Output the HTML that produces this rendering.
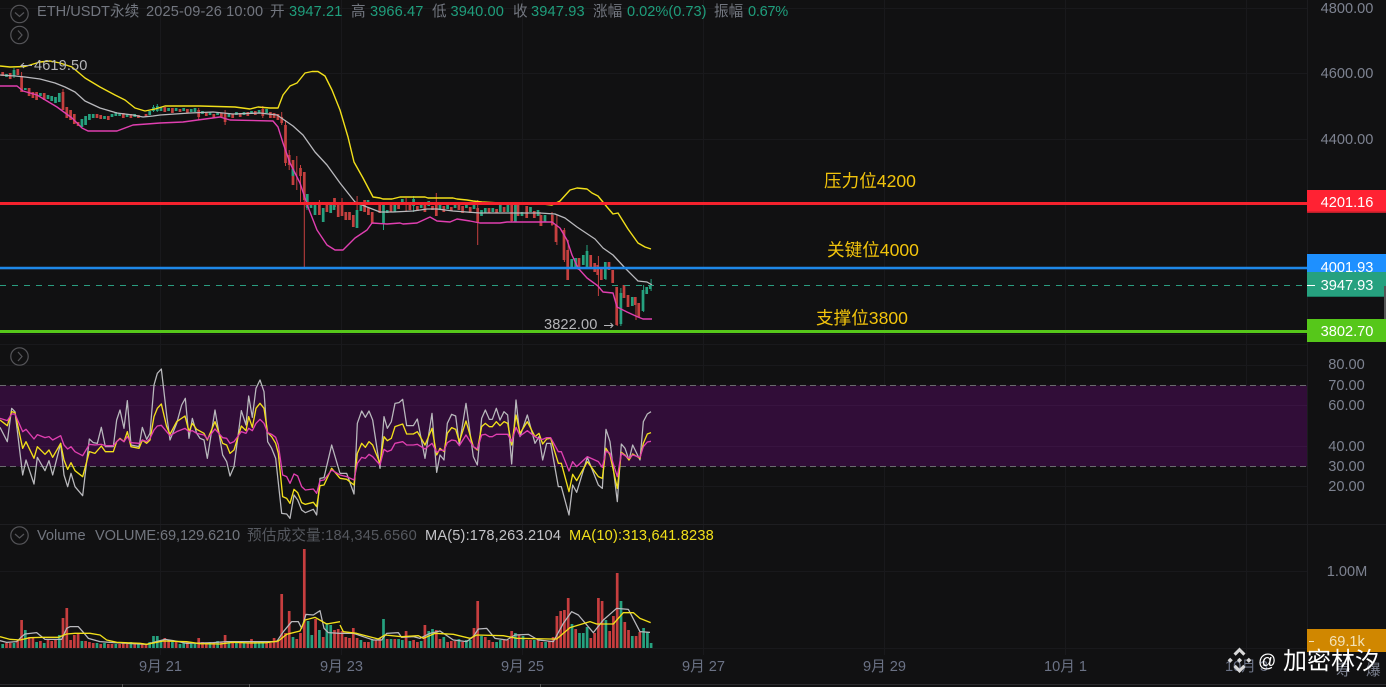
<!DOCTYPE html>
<html><head><meta charset="utf-8">
<style>
html,body{margin:0;padding:0;background:#111112;width:1386px;height:687px;overflow:hidden}
svg{display:block;position:absolute;left:0;top:0}
text{font-family:"Liberation Sans","Noto Sans CJK SC",sans-serif;font-size:14.6px}
.g{fill:#72767f}.u{fill:#1f9e7c}.a{fill:#7d8290;text-anchor:middle}.d{fill:#6b7285;text-anchor:middle}
.w{fill:#fff;text-anchor:middle}.y{fill:#f2c40c;font-size:17.6px}
.l{fill:none;stroke-linejoin:round}
</style></head><body>
<svg width="1386" height="687" viewBox="0 0 1386 687">
<rect width="1386" height="687" fill="#111112"/>
<!-- grid -->
<path d="M0 8.5H1307M0 73.5H1307M0 139.5H1307M0 204.5H1307M0 269.5H1307M0 334.5H1307M0 344.5H1307M0 365.5H1307M0 405.5H1307M0 446.5H1307M0 486.5H1307M0 571.5H1307M0 648.5H1307" stroke="#19191c" stroke-width="1"/>
<path d="M160.5 0V655M341.5 0V655M522.5 0V655M703.5 0V655M884.5 0V655M1065.5 0V655M1246.5 0V655" stroke="#19191c" stroke-width="1"/>
<path d="M1307.5 0V652" stroke="#1c1c1f"/>
<path d="M0 524.5H1386" stroke="#1e1e21"/>
<path d="M0 684.5H1386" stroke="#2a2a2d"/>
<path d="M122.5 684V687M249.5 684V687M540.5 684V687" stroke="#555"/>
<!-- RSI band -->
<rect x="0" y="385.5" width="1307" height="81" fill="#310d38"/>
<path d="M0 385.5H1307M0 466.5H1307" stroke="#6a6a6e" stroke-width="1" stroke-dasharray="6 4"/>
<path d="M0 405.5H1307M0 446.5H1307" stroke="#381440" stroke-width="1"/>
<!-- candle wicks -->
<path fill="none" stroke="#c5403f" stroke-width="1" d="M21.6 72V92M63 89V110M198.7 108V120M225.1 110V125M262.8 106V118M304.3 200V267M281.7 112V125M285.5 120V166M289.2 150V170M296.8 156V190M300.5 165V202M319.4 200V215M342 198V215M357.1 196V228M406.1 198V212M436.3 193V216M477.7 200V245M511.7 203V222M540 212V226M552 212V226M568.2 240V280M598.4 256V296M617.2 287V326M636 297V320M556.9 215V245M564.4 228V262"/>
<path fill="none" stroke="#26a17f" stroke-width="1" d="M14 68V78M153.5 105V112M157.3 104V112M307 194V210M383.5 203V230M413.6 196V212M620.9 288V326M643.6 285V312M651.1 279V291M587 245V268M605.9 262V280"/>
<!-- candle bodies -->
<path fill="none" stroke="#c5403f" stroke-width="2.7" d="M2.7 72V76M10.2 73V79M17.8 69V75M21.6 76V92M29.1 88V96M32.9 92V98M36.6 92V100M44.2 93V100M63 92V110M66.8 107V118M70.6 110V120M74.3 114V124M78.1 122V126M97 114V118M100.7 115V119M108.3 116V120M123.3 113V118M130.9 114V118M138.4 115V118M146 114V117M164.8 107V112M172.4 108V113M180 109V112M187.4 109V113M198.7 110V117M206.3 112V116M213.8 114V118M221.4 113V117M225.1 114V122M232.7 114V118M240.2 113V117M247.8 112V116M255.3 111V115M262.8 109V116M270.4 112V118M274.1 113V118M277.9 114V120M281.7 117V123M285.5 125V163M289.2 155V165M293 160V185M300.5 168V176M304.3 172V200M307 200V207M319.4 205V215M326.9 205V212M334.5 198V207M338.2 205V217M342 205V216M345.8 212V220M349.5 212V220M353.3 215V227M364.6 200V212M368.4 208V215M372.2 212V223M379.7 204V213M391 205V212M398.6 204V209M409.9 203V210M417.4 206V211M424.9 205V212M432.5 206V210M436.3 203V216M443.8 206V212M451.3 207V211M458.9 205V210M462.6 206V213M470.2 207V213M477.7 208V222M489 208V213M496.6 209V213M504.1 207V212M511.7 205V221M518 205V216M526.7 206V218M534.3 211V218M541 215V226M552.3 215V225M556 225V242M564 230V260M567.7 250V280M579 258V270M590.7 255V268M594.7 263V272M597.7 265V275M601.3 267V280M609 262V270M612.7 270V283M616.7 287V325M624 285V298M628 295V307M635.3 297V305M638.7 303V317"/>
<path fill="none" stroke="#26a17f" stroke-width="2.7" d="M6.5 74V77M14 70V76M25.3 88V90M40.4 93V96M48 95V99M51.7 96V101M55.5 97V103M59.3 93V102M81.9 119V127M85.6 116V125M89.4 114V120M93.2 114V118M104.5 116V119M112 114V117M115.8 112V116M119.6 113V116M127.1 114V117M134.7 114V117M149.7 111V115M153.5 107V111M157.3 106V111M161 107V111M168.6 108V111M176.1 108V111M183.7 108V111M191.2 109V112M195 108V112M202.5 111V114M210 112V115M217.6 112V115M228.9 113V117M236.4 112V115M244 112V115M251.5 111V114M259.1 110V113M266.6 109V113M292.9 169V176M307.3 194V208M311 204V208M315 205V215M323.2 208V222M330.7 205V213M334 205V210M357 210V228M360.9 204V211M368 200V205M383.5 205V224M387.2 210V213M394.8 205V212M402.3 199V205M413.6 199V206M421.2 203V208M428.7 201V206M440 204V209M447.6 205V209M455.1 205V208M466.4 204V208M474 205V209M481.5 210V216M485.3 208V213M492.8 208V212M500.3 205V212M507.9 204V212M515.4 203V222M522 212V216M530.5 207V212M538 210V216M545 215V222M571.7 259V269M575.7 258V268M583.3 255V265M587 251V268M605.3 262V279M620.9 293V324M632.3 297V306M643 290V311M646.7 287V294M650.3 285V289"/>
<!-- main MA lines -->
<polyline class="l" stroke="#f2e01a" stroke-width="1.4" points="0,66 10,67 25,66.5 40,62 50,61 60,63 72,67 85,78 100,87 115,95 125,100 135,108 145,111 155,109 165,106 180,106 200,106 235,107 250,109 258,107 270,108 278,108 283,95 290,86 297,83 305,73 312,71.5 318,71.5 325,76 332,90 340,110 348,137 354,162 363,178 373,197 380,198 383,199 392,199 400,197 410,197 425,197 428,198 453,198 457,199 467,200 473,201 482,202 500,203 543,204 552,205 560,201 570,190 577,188 587,189 592,193 598,196 607,207 613,214 618,213 628,229 638,243 645,247 651,249"/>
<polyline class="l" stroke="#b9b9bd" stroke-width="1.3" points="0,75 15,76 25,77 40,79 55,83 65,87 75,92 85,101 100,108 117,113 133,115 143,117 153,116 160,115 190,113 213,112 233,114 260,113 277,115 293,126 303,135 315,152 327,165 340,183 355,202 367,207 380,212 393,212 413,211 427,209 437,209 453,211 480,213 500,213 540,213 555,214 565,218 577,227 595,239 603,248 613,255 625,268 638,281 647,282 652,285"/>
<polyline class="l" stroke="#e03fb0" stroke-width="1.4" points="0,86 17,86 23,91 37,95 57,107 72,118 82,128 88,131 117,131 133,125 147,124 160,123 183,122 220,117 230,120 273,121 278,127 283,143 290,163 300,183 308,207 317,230 327,245 335,250 343,250 355,238 367,230 372,223 387,224 400,223 403,224 417,223 430,217 437,221 450,222 457,219 470,221 480,223 500,223 507,222 552,222 560,228 567,240 572,255 578,268 587,278 598,286 603,292 613,293 617,307 627,312 638,317 643,319 652,319"/>
<!-- level lines -->
<path d="M0 203.5H1307" stroke="#f5222d" stroke-width="3"/>
<path d="M0 268H1307" stroke="#1e88e8" stroke-width="2.5"/>
<path d="M0 331.5H1307" stroke="#56c71a" stroke-width="3"/>
<path d="M0 285.5H1307" stroke="#2a9d80" stroke-width="1" stroke-dasharray="6 6"/>
<!-- RSI lines left -->
<g transform="translate(0,340) scale(.33333)" fill="none" stroke-linejoin="round">
<polyline stroke="#b9b9bd" stroke-width="3.8" points="0,262 22,305 35,205 45,215 68,405 78,360 102,432 112,352 135,392 147,362 158,405 182,310 192,405 203,440 213,400 225,440 248,467 268,297 280,308 292,310 304,262 316,320 340,320 350,240 360,210 372,265 382,182 393,315 417,320 427,262 440,298 450,280 462,135 472,100 484,87 500,225 510,300 530,250 545,195 556,175 567,295 577,235 590,280 600,295 612,300 622,355 645,210 668,345 680,365 690,408 702,380 724,212 738,255 746,168 757,232 768,145 780,120 792,155 803,305 815,325 827,355 845,520 860,522 870,535 882,465 893,480 905,510 916,518 940,508 950,525 960,415 972,413 995,315 1020,400"/>
<polyline stroke="#f2e01a" stroke-width="4" points="0,240 22,257 35,215 45,218 68,325 78,305 102,355 112,320 135,343 147,330 158,352 182,310 192,360 203,388 213,368 225,392 248,410 268,335 285,340 304,318 316,335 340,335 350,305 360,295 372,305 382,275 393,320 417,325 427,300 440,310 450,300 462,230 472,205 484,192 500,260 510,283 530,245 555,228 567,275 577,250 590,268 612,280 622,300 645,245 668,310 680,315 690,340 702,330 724,258 738,272 746,230 757,262 768,205 780,190 792,205 803,278 815,290 827,310 835,340 848,470 860,475 870,490 882,448 893,458 905,488 916,493 940,487 950,500 960,437 972,435 995,385 1020,415"/>
<polyline stroke="#e03fb0" stroke-width="4" points="0,235 22,242 35,222 45,222 68,275 78,268 102,297 112,284 135,293 147,290 158,300 182,287 192,315 203,327 213,320 225,335 248,347 268,313 285,315 304,313 316,317 340,317 350,305 360,297 372,305 382,290 393,308 417,310 427,300 440,305 450,295 462,270 472,258 484,256 500,275 510,287 530,275 555,265 567,275 577,272 590,280 612,285 622,297 645,267 668,293 680,295 690,310 702,305 724,275 738,280 746,265 757,272 768,250 780,238 792,250 803,278 815,283 827,292 835,315 848,405 860,410 870,430 882,402 893,408 905,440 916,450 940,447 950,460 960,422 972,420 995,390 1020,405"/>
</g>
<g transform="translate(330,340) scale(.33333)" fill="none" stroke-linejoin="round">
<polyline stroke="#b9b9bd" stroke-width="3.8" points="30,400 50,400 72,462 82,250 95,213 106,232 117,213 128,240 150,385 162,230 172,265 184,245 195,190 207,188 218,178 230,257 250,257 262,237 285,355 306,220 320,397 330,345 342,360 352,250 365,223 377,228 388,315 408,190 430,350 442,375 455,235 466,210 478,238 487,238 499,205 510,240 522,215 533,225 545,372 558,180 570,290 592,225 615,310 627,290 638,360 650,310 662,310 685,440 694,440 717,525 728,435 740,457 772,352 805,435 817,445 828,268 840,305 862,485 874,312 885,325 897,360 908,315 930,360 940,245 952,222 963,215"/>
<polyline stroke="#f2e01a" stroke-width="4" points="30,415 50,418 72,435 82,340 95,310 106,322 117,305 128,315 150,370 162,290 172,302 184,295 195,260 218,252 230,282 250,282 262,275 285,315 306,265 320,345 330,325 342,335 352,280 365,263 377,268 388,305 408,243 430,320 442,330 455,260 466,250 478,260 487,260 499,245 510,257 522,245 533,250 545,315 558,225 570,280 592,245 615,290 627,280 638,312 650,297 662,295 685,370 694,370 717,455 728,403 740,422 772,365 805,410 817,415 828,325 840,345 862,445 874,337 885,345 897,360 908,342 930,355 940,310 952,282 963,278"/>
<polyline stroke="#e03fb0" stroke-width="4" points="30,405 50,410 72,420 82,370 95,352 106,355 117,343 128,350 150,375 162,328 172,335 184,330 195,310 218,305 230,315 250,315 262,313 285,327 306,310 320,337 330,330 342,332 352,308 365,300 377,302 388,317 408,285 430,320 442,327 455,285 466,283 478,290 487,290 499,283 533,283 545,305 558,262 570,288 592,272 615,290 627,297 638,298 650,293 662,293 685,335 694,335 717,393 728,365 740,380 772,350 805,365 817,382 828,333 840,340 862,410 874,340 885,347 897,355 908,345 930,352 940,320 952,306 963,304"/>
</g>
<!-- volume bars -->
<path fill="none" stroke="#c73e3f" stroke-width="2.7" d="M6.5 648V643M10.2 648V643M17.8 648V640M21.6 648V620M29.1 648V637M32.9 648V638M40.4 648V641M48 648V640M51.7 648V641M55.5 648V640M63 648V618M66.8 648V608M70.6 648V640M74.3 648V635M78.1 648V633M85.6 648V641M89.4 648V642M93.2 648V643M100.7 648V644M108.3 648V644M112 648V644M119.6 648V644M123.3 648V643M127.1 648V644M134.7 648V643M142.2 648V643M146 648V644M164.8 648V638M168.6 648V641M176.1 648V641M187.4 648V642M198.7 648V638M202.5 648V642M206.3 648V643M213.8 648V642M221.4 648V642M225.1 648V635M232.7 648V642M240.2 648V643M247.8 648V643M251.5 648V639M266.6 648V643M270.4 648V643M274.1 648V638M277.9 648V640M281.7 648V594M285.5 648V633M289.2 648V611M296.8 648V639M300.5 648V633M304.3 648V549M315.6 648V619M323.2 648V637M334.5 648V630M338.2 648V629M342 648V631M345.8 648V637M349.5 648V638M353.3 648V628M357.1 648V638M364.6 648V642M368.4 648V642M376 648V640M379.7 648V638M387.2 648V639M394.8 648V639M406.1 648V631M413.6 648V640M417.4 648V642M424.9 648V625M436.3 648V630M440 648V639M447.6 648V642M451.3 648V641M455.1 648V641M462.6 648V642M474 648V628M477.7 648V601M485.3 648V637M489 648V640M492.8 648V642M504.1 648V640M507.9 648V640M511.7 648V631M519 648V635M526.7 648V640M530.5 648V640M538 648V640M541.8 648V642M549.4 648V641M553.1 648V637M556.9 648V616M560.7 648V611M564.4 648V610M568.2 648V598M575.7 648V629M590.8 648V638M594.6 648V633M598.4 648V598M602.1 648V601M609.7 648V631M613.4 648V616M617.2 648V573M624.8 648V622M628.5 648V630M636.1 648V636M639.8 648V632"/>
<path fill="none" stroke="#26a17f" stroke-width="2.7" d="M2.7 648V644M14 648V643M25.3 648V630M36.6 648V642M44.2 648V643M59.3 648V635M81.9 648V641M97 648V643M104.5 648V643M115.8 648V644M130.9 648V642M138.4 648V644M149.7 648V642M153.5 648V636M157.3 648V636M161 648V641M172.4 648V642M180 648V644M183.7 648V643M191.2 648V644M195 648V643M210 648V642M217.6 648V641M228.9 648V642M236.4 648V643M244 648V643M255.3 648V642M259.1 648V642M262.8 648V641M293 648V637M308.1 648V621M311.8 648V635M319.4 648V630M326.9 648V623M330.7 648V625M360.9 648V640M372.2 648V640M383.5 648V619M391 648V639M398.6 648V639M402.3 648V640M409.9 648V641M421.2 648V641M428.7 648V631M432.5 648V629M443.8 648V637M458.9 648V639M466.4 648V640M470.2 648V640M481.5 648V636M496.6 648V642M500.3 648V640M515.4 648V633M523 648V636M534.3 648V640M545.6 648V642M572 648V624M579.5 648V633M583.3 648V633M587.1 648V627M605.9 648V620M621 648V601M632.3 648V636M643.6 648V628M647.4 648V632M651.1 648V643"/>
<!-- volume MA lines -->
<g transform="translate(0,525) scale(.33333)" fill="none" stroke-linejoin="round">
<polyline stroke="#b9b9bd" stroke-width="3.8" points="0,347 20,352 50,350 65,335 75,327 110,323 125,335 135,343 185,343 200,310 210,305 235,305 250,322 265,340 300,350 340,353 440,358 460,352 495,343 520,347 560,355 640,353 680,350 720,350 800,350 830,350 850,320 875,290 895,290 905,310 918,268 940,270 960,257 972,310 985,323 1020,325"/>
<polyline stroke="#f2e01a" stroke-width="4" points="0,335 30,343 60,345 90,338 130,337 175,337 200,327 225,325 270,325 300,330 320,345 350,352 420,355 440,358 490,348 560,350 600,356 660,357 700,352 750,354 800,353 835,348 860,328 900,318 915,285 945,277 980,297 1020,290"/>
</g>
<g transform="translate(330,525) scale(.33333)" fill="none" stroke-linejoin="round">
<polyline stroke="#b9b9bd" stroke-width="3.8" points="30,325 40,325 70,325 100,335 130,345 155,345 170,325 205,323 215,337 250,335 270,340 300,325 330,318 370,345 410,350 430,335 445,312 470,310 495,340 530,345 555,330 595,328 625,345 670,350 700,295 725,260 745,270 790,323 820,285 860,250 895,253 930,320 960,322"/>
<polyline stroke="#f2e01a" stroke-width="4" points="30,300 40,320 80,325 110,333 145,342 165,330 215,335 265,332 280,340 315,325 370,328 420,340 440,330 520,332 560,340 660,342 680,342 720,308 780,290 800,297 850,297 880,263 910,263 930,280 962,293"/>
</g>
<!-- circle icons -->
<g fill="none" stroke="#555559" stroke-width="1.2">
<circle cx="19.5" cy="14" r="8.7"/><path d="M15 12.5l4.5 4 4.5-4"/>
<circle cx="19.5" cy="35" r="8.7"/><path d="M18 30.5l4 4.5-4 4.5"/>
<circle cx="19.5" cy="356.5" r="8.7"/><path d="M18 352l4 4.5-4 4.5"/>
<circle cx="19.5" cy="535.5" r="8.7"/><path d="M15 534l4.500 4 4.500-4"/>
</g>
<!-- header -->
<text class="g" x="37" y="16">ETH/USDT永续</text>
<text class="g" x="146" y="16" style="letter-spacing:.13px">2025-09-26 10:00</text>
<text class="g" x="270" y="16">开</text><text class="u" x="289" y="16" style="letter-spacing:.1px">3947.21</text>
<text class="g" x="351" y="16">高</text><text class="u" x="370" y="16" style="letter-spacing:.1px">3966.47</text>
<text class="g" x="432" y="16">低</text><text class="u" x="450.500" y="16" style="letter-spacing:.1px">3940.00</text>
<text class="g" x="513" y="16">收</text><text class="u" x="531" y="16" style="letter-spacing:.15px">3947.93</text>
<text class="g" x="593" y="16">涨幅</text><text class="u" x="627" y="16">0.02%(0.73)</text>
<text class="g" x="714" y="16">振幅</text><text class="u" x="748" y="16" style="letter-spacing:-.3px">0.67%</text>
<!-- annotations -->
<path d="M21 65.500H32M24 63l-3 2.500 3 2.500" fill="none" stroke="#b5b5b8" stroke-width="1"/>
<text x="34" y="70" fill="#b5b5b8" style="letter-spacing:.1px">4619.50</text>
<text x="544" y="329" fill="#b5b5b8" style="letter-spacing:.1px">3822.00</text>
<path d="M604 325.500H613M610.500 323l2.500 2.500-2.500 2.500" fill="none" stroke="#b5b5b8" stroke-width="1"/>
<text class="y" x="824" y="187">压力位4200</text>
<text class="y" x="827" y="256">关键位4000</text>
<text class="y" x="816" y="324">支撑位3800</text>
<!-- axis labels -->
<text class="a" x="1347" y="13">4800.00</text>
<text class="a" x="1347" y="78">4600.00</text>
<text class="a" x="1347" y="144">4400.00</text>
<text class="a" x="1346.500" y="369">80.00</text>
<text class="a" x="1346.500" y="390">70.00</text>
<text class="a" x="1346.500" y="410">60.00</text>
<text class="a" x="1346.500" y="451">40.00</text>
<text class="a" x="1346.500" y="471">30.00</text>
<text class="a" x="1346.500" y="491">20.00</text>
<text class="a" x="1347" y="576">1.00M</text>
<!-- price tags -->
<rect x="1307" y="190" width="79" height="23" fill="#ff2233"/><rect x="1307" y="211.500" width="79" height="1.500" fill="#b8202a"/>
<text class="w" x="1347" y="207">4201.16</text>
<rect x="1307" y="254" width="79" height="19" fill="#1e90ff"/>
<text class="w" x="1347" y="272">4001.93</text>
<rect x="1307" y="272" width="79" height="25" fill="#26a17f"/><rect x="1307" y="296" width="79" height="1" fill="#1a7a60"/>
<text class="w" x="1347" y="290">3947.93</text>
<path d="M1307 285.500H1315" stroke="#fff"/>
<rect x="1384" y="286" width="2" height="46" fill="#555"/>
<rect x="1307" y="319" width="79" height="23" fill="#56c71a"/>
<text class="w" x="1347" y="336">3802.70</text>
<rect x="1307" y="629" width="79" height="23" fill="#d08700"/>
<text class="w" x="1347" y="646" style="fill:#f3e2b8">69.1k</text>
<path d="M1309 641.500H1314" stroke="#f3e2b8"/>
<!-- volume header -->
<text class="g" x="37" y="540">Volume</text>
<text class="g" x="95" y="540" style="letter-spacing:-.1px">VOLUME:69,129.6210</text>
<text x="247" y="540" fill="#55585f" style="letter-spacing:.2px">预估成交量:184,345.6560</text>
<text x="425" y="540" fill="#c4c4c8" style="letter-spacing:.17px">MA(5):178,263.2104</text>
<text x="569" y="540" fill="#f2e01a" style="letter-spacing:.2px">MA(10):313,641.8238</text>
<!-- dates -->
<text class="d" x="160.500" y="671">9月 21</text>
<text class="d" x="341.500" y="671">9月 23</text>
<text class="d" x="522.500" y="671">9月 25</text>
<text class="d" x="703.500" y="671">9月 27</text>
<text class="d" x="884.500" y="671">9月 29</text>
<text class="d" x="1065.500" y="671">10月 1</text>
<text class="d" x="1246.500" y="671">10月 3</text>
<text x="1336" y="675" fill="#7d8290">寿</text><text x="1366" y="675" fill="#7d8290">爆</text>
<!-- watermark -->
<g fill="#d8d8d8">
<path d="M1239.500 647.500l6 6-2.200 2.200-3.800-3.800-3.800 3.800-2.200-2.200z"/>
<path d="M1239.500 673l6-6-2.200-2.200-3.800 3.800-3.800-3.800-2.200 2.200z"/>
<path d="M1239.500 657.700l2.600 2.600-2.600 2.600-2.600-2.600z"/>
<path d="M1230.200 657.700l2.600 2.600-2.600 2.600-2.600-2.600zM1248.800 657.700l2.600 2.600-2.600 2.600-2.600-2.600z"/>
</g>
<text x="1258" y="667" fill="#fff" style="font-size:18px">@</text>
<text x="1283" y="669" fill="#fff" style="font-size:24px">加密林汐</text>
</svg>
</body></html>
